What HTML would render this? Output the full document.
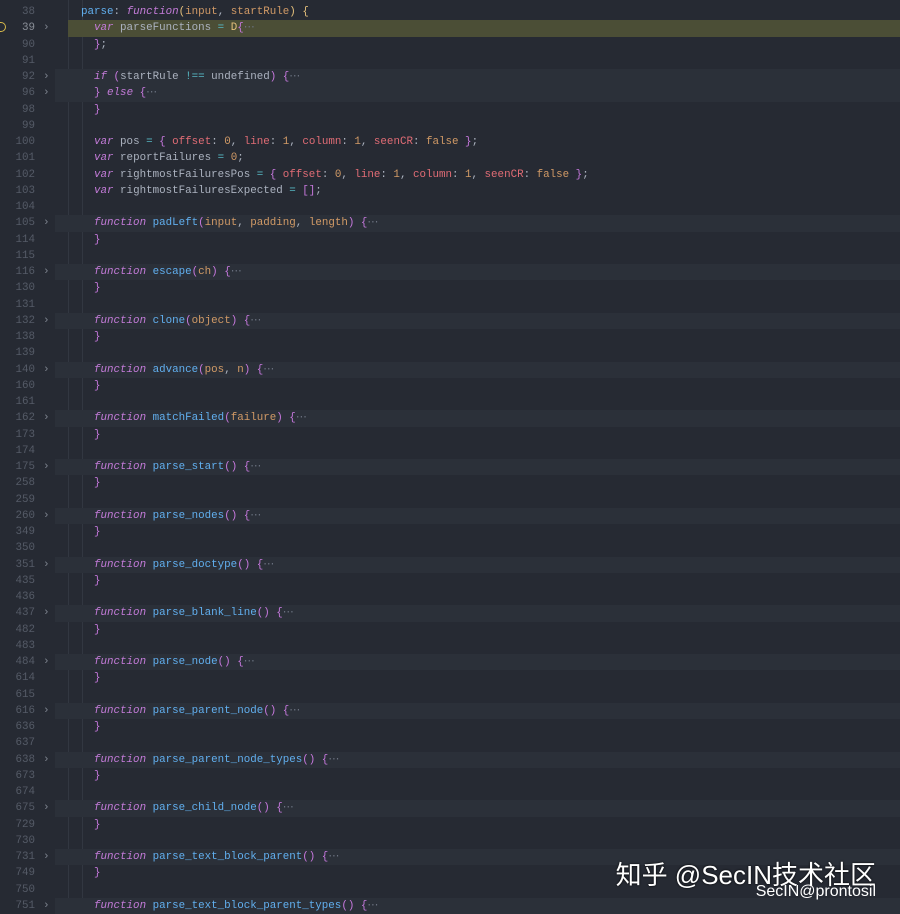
<!DOCTYPE html>
<html><head><meta charset="utf-8"><style>
body{margin:0;width:900px;height:912px;background:#262a33;overflow:hidden;position:relative;font-family:"Liberation Mono",monospace;font-size:10.85px;color:#abb2bf}
.r{position:absolute;left:0;width:900px;height:16.25px;line-height:16.25px;white-space:pre}
.fd{background:linear-gradient(90deg,transparent 55px,#2b3039 55px)}
.hl{background:linear-gradient(90deg,transparent 68px,#4b4e36 68px)}
.n{position:absolute;left:0;width:35px;text-align:right;color:#555b67}
.hl .n{color:#8a8f98}
.c{position:absolute;left:43px;color:#7c828d;font-size:11px}
.t{position:absolute;left:81px}
.k{color:#c37bd8;font-style:italic}.f{color:#61afef}.p{color:#d19a66}.b{color:#c678dd}.o{color:#56b6c2}.x{color:#e06c75}.e{color:#6b7280}.y{color:#e5c07b}
.g{position:absolute;top:0;bottom:0;width:1px;background:#323741}
.wm{position:absolute;right:24px;top:855px;color:#fff;font-family:"Liberation Sans","Noto Sans CJK SC",sans-serif;font-size:26px;text-shadow:0 0 2px #000}
.wm2{position:absolute;right:24px;top:883px;color:#fff;font-family:"Liberation Sans",sans-serif;font-size:16px}
</style></head><body>
<div class="g" style="left:68px"></div><div class="g" style="left:82px"></div>
<div class="r" style="top:4px"><span class="n">38</span><span class="t"><span class="f">parse</span>: <span class="k">function</span><span class="y">(</span><span class="p">input</span>, <span class="p">startRule</span><span class="y">)</span> <span class="y">{</span></span></div>
<div class="r hl" style="top:20.25px"><span class="n">39</span><span class="c">›</span><span class="t">  <span class="k">var</span> parseFunctions <span class="o">=</span> <span class="y">D</span><span class="b">{</span><span class="e">⋯</span></span></div>
<div class="r" style="top:36.5px"><span class="n">90</span><span class="t">  <span class="b">}</span>;</span></div>
<div class="r" style="top:52.75px"><span class="n">91</span></div>
<div class="r fd" style="top:69px"><span class="n">92</span><span class="c">›</span><span class="t">  <span class="k">if</span> <span class="b">(</span>startRule <span class="o">!==</span> undefined<span class="b">)</span> <span class="b">{</span><span class="e">⋯</span></span></div>
<div class="r fd" style="top:85.25px"><span class="n">96</span><span class="c">›</span><span class="t">  <span class="b">}</span> <span class="k">else</span> <span class="b">{</span><span class="e">⋯</span></span></div>
<div class="r" style="top:101.5px"><span class="n">98</span><span class="t">  <span class="b">}</span></span></div>
<div class="r" style="top:117.75px"><span class="n">99</span></div>
<div class="r" style="top:134px"><span class="n">100</span><span class="t">  <span class="k">var</span> pos <span class="o">=</span> <span class="b">{</span> <span class="x">offset</span>: <span class="p">0</span>, <span class="x">line</span>: <span class="p">1</span>, <span class="x">column</span>: <span class="p">1</span>, <span class="x">seenCR</span>: <span class="p">false</span> <span class="b">}</span>;</span></div>
<div class="r" style="top:150.25px"><span class="n">101</span><span class="t">  <span class="k">var</span> reportFailures <span class="o">=</span> <span class="p">0</span>;</span></div>
<div class="r" style="top:166.5px"><span class="n">102</span><span class="t">  <span class="k">var</span> rightmostFailuresPos <span class="o">=</span> <span class="b">{</span> <span class="x">offset</span>: <span class="p">0</span>, <span class="x">line</span>: <span class="p">1</span>, <span class="x">column</span>: <span class="p">1</span>, <span class="x">seenCR</span>: <span class="p">false</span> <span class="b">}</span>;</span></div>
<div class="r" style="top:182.75px"><span class="n">103</span><span class="t">  <span class="k">var</span> rightmostFailuresExpected <span class="o">=</span> <span class="b">[]</span>;</span></div>
<div class="r" style="top:199px"><span class="n">104</span></div>
<div class="r fd" style="top:215.25px"><span class="n">105</span><span class="c">›</span><span class="t">  <span class="k">function</span> <span class="f">padLeft</span><span class="b">(</span><span class="p">input</span>, <span class="p">padding</span>, <span class="p">length</span><span class="b">)</span> <span class="b">{</span><span class="e">⋯</span></span></div>
<div class="r" style="top:231.5px"><span class="n">114</span><span class="t">  <span class="b">}</span></span></div>
<div class="r" style="top:247.75px"><span class="n">115</span></div>
<div class="r fd" style="top:264px"><span class="n">116</span><span class="c">›</span><span class="t">  <span class="k">function</span> <span class="f">escape</span><span class="b">(</span><span class="p">ch</span><span class="b">)</span> <span class="b">{</span><span class="e">⋯</span></span></div>
<div class="r" style="top:280.25px"><span class="n">130</span><span class="t">  <span class="b">}</span></span></div>
<div class="r" style="top:296.5px"><span class="n">131</span></div>
<div class="r fd" style="top:312.75px"><span class="n">132</span><span class="c">›</span><span class="t">  <span class="k">function</span> <span class="f">clone</span><span class="b">(</span><span class="p">object</span><span class="b">)</span> <span class="b">{</span><span class="e">⋯</span></span></div>
<div class="r" style="top:329px"><span class="n">138</span><span class="t">  <span class="b">}</span></span></div>
<div class="r" style="top:345.25px"><span class="n">139</span></div>
<div class="r fd" style="top:361.5px"><span class="n">140</span><span class="c">›</span><span class="t">  <span class="k">function</span> <span class="f">advance</span><span class="b">(</span><span class="p">pos</span>, <span class="p">n</span><span class="b">)</span> <span class="b">{</span><span class="e">⋯</span></span></div>
<div class="r" style="top:377.75px"><span class="n">160</span><span class="t">  <span class="b">}</span></span></div>
<div class="r" style="top:394px"><span class="n">161</span></div>
<div class="r fd" style="top:410.25px"><span class="n">162</span><span class="c">›</span><span class="t">  <span class="k">function</span> <span class="f">matchFailed</span><span class="b">(</span><span class="p">failure</span><span class="b">)</span> <span class="b">{</span><span class="e">⋯</span></span></div>
<div class="r" style="top:426.5px"><span class="n">173</span><span class="t">  <span class="b">}</span></span></div>
<div class="r" style="top:442.75px"><span class="n">174</span></div>
<div class="r fd" style="top:459px"><span class="n">175</span><span class="c">›</span><span class="t">  <span class="k">function</span> <span class="f">parse_start</span><span class="b">()</span> <span class="b">{</span><span class="e">⋯</span></span></div>
<div class="r" style="top:475.25px"><span class="n">258</span><span class="t">  <span class="b">}</span></span></div>
<div class="r" style="top:491.5px"><span class="n">259</span></div>
<div class="r fd" style="top:507.75px"><span class="n">260</span><span class="c">›</span><span class="t">  <span class="k">function</span> <span class="f">parse_nodes</span><span class="b">()</span> <span class="b">{</span><span class="e">⋯</span></span></div>
<div class="r" style="top:524px"><span class="n">349</span><span class="t">  <span class="b">}</span></span></div>
<div class="r" style="top:540.25px"><span class="n">350</span></div>
<div class="r fd" style="top:556.5px"><span class="n">351</span><span class="c">›</span><span class="t">  <span class="k">function</span> <span class="f">parse_doctype</span><span class="b">()</span> <span class="b">{</span><span class="e">⋯</span></span></div>
<div class="r" style="top:572.75px"><span class="n">435</span><span class="t">  <span class="b">}</span></span></div>
<div class="r" style="top:589px"><span class="n">436</span></div>
<div class="r fd" style="top:605.25px"><span class="n">437</span><span class="c">›</span><span class="t">  <span class="k">function</span> <span class="f">parse_blank_line</span><span class="b">()</span> <span class="b">{</span><span class="e">⋯</span></span></div>
<div class="r" style="top:621.5px"><span class="n">482</span><span class="t">  <span class="b">}</span></span></div>
<div class="r" style="top:637.75px"><span class="n">483</span></div>
<div class="r fd" style="top:654px"><span class="n">484</span><span class="c">›</span><span class="t">  <span class="k">function</span> <span class="f">parse_node</span><span class="b">()</span> <span class="b">{</span><span class="e">⋯</span></span></div>
<div class="r" style="top:670.25px"><span class="n">614</span><span class="t">  <span class="b">}</span></span></div>
<div class="r" style="top:686.5px"><span class="n">615</span></div>
<div class="r fd" style="top:702.75px"><span class="n">616</span><span class="c">›</span><span class="t">  <span class="k">function</span> <span class="f">parse_parent_node</span><span class="b">()</span> <span class="b">{</span><span class="e">⋯</span></span></div>
<div class="r" style="top:719px"><span class="n">636</span><span class="t">  <span class="b">}</span></span></div>
<div class="r" style="top:735.25px"><span class="n">637</span></div>
<div class="r fd" style="top:751.5px"><span class="n">638</span><span class="c">›</span><span class="t">  <span class="k">function</span> <span class="f">parse_parent_node_types</span><span class="b">()</span> <span class="b">{</span><span class="e">⋯</span></span></div>
<div class="r" style="top:767.75px"><span class="n">673</span><span class="t">  <span class="b">}</span></span></div>
<div class="r" style="top:784px"><span class="n">674</span></div>
<div class="r fd" style="top:800.25px"><span class="n">675</span><span class="c">›</span><span class="t">  <span class="k">function</span> <span class="f">parse_child_node</span><span class="b">()</span> <span class="b">{</span><span class="e">⋯</span></span></div>
<div class="r" style="top:816.5px"><span class="n">729</span><span class="t">  <span class="b">}</span></span></div>
<div class="r" style="top:832.75px"><span class="n">730</span></div>
<div class="r fd" style="top:849px"><span class="n">731</span><span class="c">›</span><span class="t">  <span class="k">function</span> <span class="f">parse_text_block_parent</span><span class="b">()</span> <span class="b">{</span><span class="e">⋯</span></span></div>
<div class="r" style="top:865.25px"><span class="n">749</span><span class="t">  <span class="b">}</span></span></div>
<div class="r" style="top:881.5px"><span class="n">750</span></div>
<div class="r fd" style="top:897.75px"><span class="n">751</span><span class="c">›</span><span class="t">  <span class="k">function</span> <span class="f">parse_text_block_parent_types</span><span class="b">()</span> <span class="b">{</span><span class="e">⋯</span></span></div>
<div style="position:absolute;left:0;top:22px;width:5px;height:8px;border:1.5px solid #d7b94a;border-left:none;border-radius:0 5px 5px 0"></div>
<div class="wm">知乎 @SecIN技术社区</div>
<div class="wm2">SecIN@prontosil</div>
</body></html>
